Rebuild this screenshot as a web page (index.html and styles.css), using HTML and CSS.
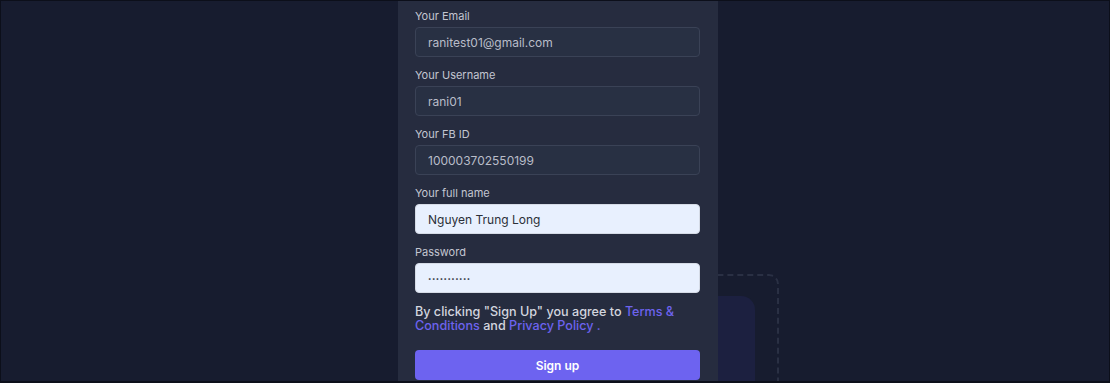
FILE: index.html
```html
<!DOCTYPE html>
<html lang="en">
  <head>
    <meta charset="UTF-8" />
    <meta name="viewport" content="width=device-width, initial-scale=1.0" />
    <title>Sign Up</title>
    <link rel="stylesheet" href="styles.css">
  </head>
  <body>
    <div class="page">
      <div class="stage">
        <div class="deco-dashed"></div>
        <div class="deco-fill"></div>
        <div class="card">
          <form class="signup-form">
            <div class="field">
              <label>Your Email</label>
              <input type="text" value="ranitest01@gmail.com" />
            </div>
            <div class="field">
              <label>Your Username</label>
              <input type="text" value="rani01" />
            </div>
            <div class="field">
              <label>Your FB ID</label>
              <input type="text" value="100003702550199" />
            </div>
            <div class="field">
              <label>Your full name</label>
              <input type="text" class="filled" value="Nguyen Trung Long" />
            </div>
            <div class="field">
              <label>Password</label>
              <input type="password" class="filled secret" value="12345678901" />
            </div>
            <p class="terms">
              By clicking "Sign Up" you agree to <a href="#">Terms &amp; Conditions</a>
              and <a href="#">Privacy Policy .</a>
            </p>
            <button type="submit">Sign up</button>
          </form>
        </div>
      </div>
    </div>
  </body>
</html>
```

FILE: styles.css
```css
body {
  margin: 0;
  font-family: Inter, "Noto Sans", sans-serif;
  background-color: #171c2f;
  height: 100vh;
  overflow: hidden;
}

.page {
  box-sizing: border-box;
  height: 100vh;
  border: 1px solid #0c0f1a;
  border-bottom-width: 2px;
  display: flex;
  justify-content: center;
  overflow: hidden;
}

.stage {
  position: relative;
  margin-left: 6px;
}

.card {
  position: relative;
  z-index: 2;
  width: 320px;
  height: 100%;
  box-sizing: border-box;
  padding: 9px 18px 0 17px;
  background-color: #262c3f;
}

.deco-dashed {
  position: absolute;
  left: 200px;
  top: 273px;
  width: 177px;
  height: 200px;
  border: 2px dashed #2a3044;
  border-radius: 10px;
}

.deco-fill {
  position: absolute;
  left: 200px;
  top: 295px;
  width: 157px;
  height: 200px;
  background-color: #1c2040;
  border-radius: 14px;
}

.field {
  display: flex;
  flex-direction: column;
  margin-bottom: 12px;
}

.field label {
  font-size: 11px;
  color: #c3c6d1;
  margin-bottom: 4px;
  line-height: 13px;
}

.field input {
  height: 30px;
  box-sizing: border-box;
  padding: 0 12px;
  font-family: inherit;
  font-size: 12px;
  color: #b9bdc9;
  background-color: #283043;
  border: 1px solid #3a4256;
  border-radius: 4px;
  outline: none;
}

.field input.filled {
  background-color: #e8f0fe;
  border-color: #d5dbe6;
  color: #2b2f38;
}

.field input.secret {
  font-size: 6px;
  letter-spacing: 0.5px;
}

.terms {
  margin: 0 0 17px;
  font-size: 12.6px;
  line-height: 14px;
  font-weight: 500;
  color: #d3d6df;
}

.terms a {
  color: #6d63ee;
  text-decoration: none;
}

button {
  width: 100%;
  height: 30px;
  border: none;
  border-radius: 4px;
  background-color: #6d63f0;
  color: #ffffff;
  font-family: inherit;
  font-size: 12px;
  font-weight: 600;
  cursor: pointer;
}
```
